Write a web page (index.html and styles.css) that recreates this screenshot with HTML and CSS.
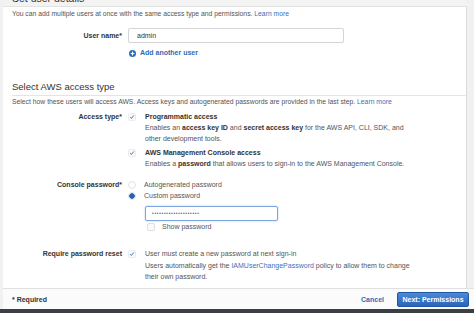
FILE: index.html
```html
<!DOCTYPE html>
<html>
<head>
<meta charset="utf-8">
<link rel="stylesheet" href="styles.css">
</head>
<body>
<div class="screen">
  <div class="topbar"><h2 class="title">Set user details</h2></div>
  <div class="panel">
    <p class="intro">You can add multiple users at once with the same access type and permissions. <a class="link">Learn more</a></p>
    <div class="row row-user">
      <label class="label label-mid">User name*</label>
      <div class="control"><div class="input">admin</div></div>
    </div>
    <div class="row row-add">
      <span></span>
      <a class="add-user"><span class="plus"><svg width="7" height="7" viewBox="0 0 10 10"><circle cx="5" cy="5" r="5" fill="#2f6ab8"/><path d="M5 2.3v5.4M2.3 5h5.4" stroke="#fff" stroke-width="1.6"/></svg></span>Add another user</a>
    </div>

    <h3 class="section">Select AWS access type</h3>
    <p class="desc">Select how these users will access AWS. Access keys and autogenerated passwords are provided in the last step. <a class="link">Learn more</a></p>

    <div class="row row-access">
      <label class="label">Access type*</label>
      <div class="control">
        <div class="option">
          <span class="check checked"><svg width="8" height="8" viewBox="0 0 10 10"><path d="M2 5.3l2 2.1 4-5" fill="none" stroke="#2c62b0" stroke-width="1.5"/></svg></span>
          <div class="opt-text">
            <div class="opt-title">Programmatic access</div>
            <div class="opt-desc">Enables an <b>access key ID</b> and <b>secret access key</b> for the AWS API, CLI, SDK, and other development tools.</div>
          </div>
        </div>
        <div class="option option-2">
          <span class="check checked"><svg width="8" height="8" viewBox="0 0 10 10"><path d="M2 5.3l2 2.1 4-5" fill="none" stroke="#2c62b0" stroke-width="1.5"/></svg></span>
          <div class="opt-text">
            <div class="opt-title">AWS Management Console access</div>
            <div class="opt-desc">Enables a <b>password</b> that allows users to sign-in to the AWS Management Console.</div>
          </div>
        </div>
      </div>
    </div>

    <div class="row row-console">
      <label class="label">Console password*</label>
      <div class="control">
        <div class="option radio-opt"><span class="radio"></span><span class="opt-plain">Autogenerated password</span></div>
        <div class="option radio-opt"><span class="radio on"></span><span class="opt-plain">Custom password</span></div>
        <div class="pw-block">
          <div class="input pw">••••••••••••••••••••</div>
          <div class="show-pw"><span class="check"></span><span class="opt-plain">Show password</span></div>
        </div>
      </div>
    </div>

    <div class="row row-reset">
      <label class="label">Require password reset</label>
      <div class="control">
        <div class="option">
          <span class="check checked"><svg width="8" height="8" viewBox="0 0 10 10"><path d="M2 5.3l2 2.1 4-5" fill="none" stroke="#2c62b0" stroke-width="1.5"/></svg></span>
          <div class="opt-text">
            <div class="opt-plain">User must create a new password at next sign-in</div>
            <div class="opt-desc reset-desc">Users automatically get the <a class="link">IAMUserChangePassword</a> policy to allow them to change their own password.</div>
          </div>
        </div>
      </div>
    </div>
  </div>
  <div class="footer">
    <span class="required">* Required</span>
    <div class="actions">
      <a class="cancel">Cancel</a>
      <button class="primary">Next: Permissions</button>
    </div>
  </div>
  <div class="darkbar"></div>
</div>
</body>
</html>
```

FILE: styles.css
```css
* { box-sizing: border-box; }
html, body { margin: 0; padding: 0; }
body {
  width: 474px;
  height: 313px;
  overflow: hidden;
  background: #f1f1f1;
  font-family: "Liberation Sans", Arial, sans-serif;
  font-size: 7px;
  color: #545454;
}
.screen {
  height: 313px;
  display: flex;
  flex-direction: column;
}
.topbar {
  height: 7px;
  overflow: hidden;
  background: #f3f3f3;
  border-bottom: 1px solid #e2e2e2;
  margin-left: 3px;
  margin-right: 7px;
  padding-left: 9px;
}
.title {
  margin: -8px 0 0 0;
  font-size: 10.5px;
  line-height: 12px;
  font-weight: normal;
  color: #333;
}
.panel {
  flex: 1;
  background: #fff;
  margin-left: 3px;
  margin-right: 7px;
  border-right: 1px solid #dcdcdc;
  padding: 2px 0 0 9px;
}
p { margin: 0; }
.intro { line-height: 10px; font-size: 6.8px; }
.link { color: #3a72bb; }
.row {
  display: grid;
  grid-template-columns: 110px 1fr;
  column-gap: 6px;
}
.label {
  text-align: right;
  font-weight: bold;
  color: #333;
  line-height: 11px;
}
.label-mid { line-height: 15px; }
.row-user { margin-top: 9px; }
.input {
  width: 216px;
  height: 15px;
  border: 1px solid #d5d5d5;
  border-radius: 2px;
  padding-left: 8px;
  line-height: 13px;
  color: #333;
  background: #fff;
}
.row-add { margin-top: 5px; line-height: 10px; }
.add-user {
  display: flex;
  align-items: center;
  gap: 4px;
  color: #2f6ab8;
  font-weight: bold;
  padding-left: 1px;
}
.plus { display: flex; }
.section {
  margin: 23px 0 0 0;
  font-size: 9.5px;
  line-height: 12px;
  font-weight: normal;
  color: #333;
  padding-bottom: 2px;
  border-bottom: 1px solid #e4e4e4;
}
.desc { margin-top: 1px; line-height: 10px; font-size: 6.8px; }
.row-access { margin-top: 4px; }
.option {
  display: grid;
  grid-template-columns: 17px 1fr;
  line-height: 11px;
}
.option-2 { margin-top: 3px; }
.check {
  width: 8px;
  height: 8px;
  margin-top: 1.5px;
  border: 1px solid #e0e0e0;
  border-radius: 2px;
  background: #fafafa;
  display: flex;
  align-items: center;
  justify-content: center;
}
.check.checked { border-color: #ececec; }
.opt-title { font-weight: bold; color: #333; }
.opt-desc { width: 262px; }
.opt-desc b { color: #333; }
.radio-opt { grid-template-columns: 16px 1fr; }
.radio {
  width: 8px;
  height: 8px;
  margin-top: 1.5px;
  border-radius: 50%;
  border: 1px solid #e2e2e2;
  background: #fff;
}
.radio.on {
  border-color: #d8e2f2;
  background: radial-gradient(circle, #2c5fae 0 2.6px, #dfe7f4 3px);
}
.row-console { margin-top: 10px; }
.pw-block { margin-top: 4.5px; padding-left: 17px; }
.input.pw {
  width: 133px;
  border-color: #7ea7e0;
  box-shadow: 0 0 2px #a9c4ee;
  font-size: 4.5px;
  letter-spacing: 0.8px;
  color: #555;
  padding-left: 6px;
}
.show-pw {
  margin-top: 0.5px;
  display: grid;
  grid-template-columns: 15px 1fr;
  line-height: 11px;
  padding-left: 2px;
}
.row-reset { margin-top: 16px; }
.reset-desc { margin-top: 1px; width: 280px; }
.footer {
  height: 21px;
  background: #fbfbfb;
  border-top: 1px solid #e0e0e0;
  margin-left: 3px;
  padding: 0 5px 0 9px;
  display: flex;
  align-items: center;
  justify-content: space-between;
}
.required { font-weight: bold; color: #333; }
.actions { display: flex; align-items: center; gap: 13px; }
.cancel { color: #2f6ab8; font-weight: bold; }
.primary {
  height: 15px;
  width: 72px;
  padding: 0;
  border: 1px solid #2058a6;
  border-radius: 2px;
  background: linear-gradient(#4c89d6, #2b65b9);
  color: #fff;
  font-family: "Liberation Sans", Arial, sans-serif;
  font-size: 7px;
  font-weight: bold;
}
.darkbar {
  height: 4px;
  background: #3b3f44;
}
```
